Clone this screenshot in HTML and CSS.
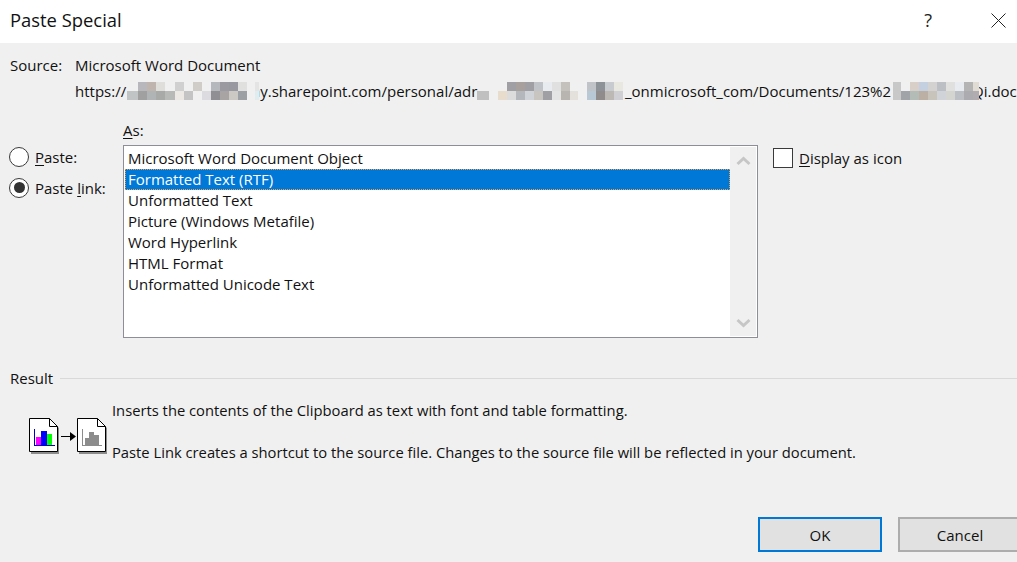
FILE: index.html
```html
<!DOCTYPE html>
<html lang="en">
<head>
<meta charset="utf-8">
<title>Paste Special</title>
<link rel="stylesheet" href="styles.css">
</head>
<body>
<div class="dialog">
  <header class="titlebar">
    <h1 class="title">Paste Special</h1>
    <span class="help">?</span>
    <svg class="close" width="15" height="15" viewBox="0 0 15 15"><path d="M0.5 0.5L14.5 14.5M14.5 0.5L0.5 14.5" stroke="#222" stroke-width="1" fill="none"/></svg>
  </header>

  <section class="source">
    <div class="source-label">Source:</div>
    <div class="source-value">
      <div class="source-name">Microsoft Word Document</div>
      <div class="url">
        <span class="url-a">https://</span>
        <svg class="mosaic m1" width="132" height="18" viewBox="127 82 132 18" shape-rendering="crispEdges">
          <rect x="247" y="82" width="8" height="18" fill="#f0f0f0"/>
          <rect x="138" y="82" width="9" height="9" fill="#b8b8bc"/><rect x="147" y="82" width="9" height="9" fill="#bfb5ae"/><rect x="156" y="82" width="9" height="9" fill="#e0dedb"/><rect x="175" y="82" width="9" height="9" fill="#d0d0d0"/><rect x="193" y="82" width="9" height="9" fill="#d0cdc8"/><rect x="211" y="82" width="9" height="9" fill="#b5b8bc"/><rect x="220" y="82" width="9" height="9" fill="#9a9aa0"/><rect x="229" y="82" width="9" height="9" fill="#9898a0"/><rect x="238" y="82" width="9" height="9" fill="#e0e0de"/><rect x="255" y="82" width="4" height="9" fill="#e4e4e4"/>
          <rect x="127" y="91" width="11" height="9" fill="#c0c4c4"/><rect x="138" y="91" width="9" height="9" fill="#a0a0a0"/><rect x="147" y="91" width="9" height="9" fill="#b0b4b4"/><rect x="156" y="91" width="9" height="9" fill="#a8aaa8"/><rect x="165" y="91" width="10" height="9" fill="#b8bab8"/><rect x="175" y="91" width="9" height="9" fill="#ece8e4"/><rect x="184" y="91" width="9" height="9" fill="#c4c4c4"/><rect x="202" y="91" width="9" height="9" fill="#dcdce0"/><rect x="211" y="91" width="9" height="9" fill="#909094"/><rect x="220" y="91" width="9" height="9" fill="#a8a4a4"/><rect x="229" y="91" width="9" height="9" fill="#ccc8c4"/><rect x="238" y="91" width="9" height="9" fill="#9ca0a4"/><rect x="255" y="91" width="4" height="9" fill="#e0ecee"/>
        </svg>
        <span class="url-b">hy.sharepoint.com/personal/adr</span>
        <svg class="mosaic m2" width="148" height="18" viewBox="477 82 148 18" shape-rendering="crispEdges">
          <rect x="507" y="82" width="9" height="9" fill="#a0a0a4"/><rect x="516" y="82" width="9" height="9" fill="#a8a09c"/><rect x="525" y="82" width="9" height="9" fill="#a0a0a4"/><rect x="534" y="82" width="9" height="9" fill="#c0c4c8"/><rect x="543" y="82" width="9" height="9" fill="#e8ecf0"/><rect x="552" y="82" width="9" height="9" fill="#e0e0e0"/><rect x="561" y="82" width="9" height="9" fill="#c4c0bc"/><rect x="587" y="82" width="9" height="9" fill="#c0c4c8"/><rect x="596" y="82" width="9" height="9" fill="#8c9298"/><rect x="605" y="82" width="9" height="9" fill="#c8ccd0"/><rect x="614" y="82" width="9" height="9" fill="#e8e8e0"/>
          <rect x="477" y="91" width="12" height="9" fill="#c0c0c0"/><rect x="498" y="91" width="9" height="9" fill="#e8dccc"/><rect x="507" y="91" width="9" height="9" fill="#dcdcdc"/><rect x="516" y="91" width="9" height="9" fill="#b4b8bc"/><rect x="525" y="91" width="9" height="9" fill="#d0d4d8"/><rect x="534" y="91" width="9" height="9" fill="#c8c4c0"/><rect x="543" y="91" width="9" height="9" fill="#a0a0a4"/><rect x="552" y="91" width="9" height="9" fill="#e4e4e4"/><rect x="561" y="91" width="9" height="9" fill="#b8b4b0"/><rect x="570" y="91" width="8" height="9" fill="#e4e0dc"/><rect x="587" y="91" width="9" height="9" fill="#b8c8d4"/><rect x="596" y="91" width="9" height="9" fill="#908c8c"/><rect x="605" y="91" width="9" height="9" fill="#bcb8b4"/><rect x="614" y="91" width="9" height="9" fill="#d0d0d4"/>
        </svg>
        <span class="url-c">_onmicrosoft_com/Documents/123%2</span>
        <svg class="mosaic m3" width="86" height="18" viewBox="893 82 86 18" shape-rendering="crispEdges">
          <rect x="893" y="82" width="8" height="9" fill="#c8c8c8"/><rect x="910" y="82" width="9" height="9" fill="#d8d0c8"/><rect x="919" y="82" width="9" height="9" fill="#c4d0e0"/><rect x="928" y="82" width="9" height="9" fill="#d4d2d0"/><rect x="937" y="82" width="9" height="9" fill="#bcc0c4"/><rect x="946" y="82" width="9" height="9" fill="#e0e0de"/><rect x="955" y="82" width="9" height="9" fill="#e8ecf0"/><rect x="964" y="82" width="9" height="9" fill="#b4b4b4"/><rect x="973" y="82" width="6" height="9" fill="#e0dcd4"/>
          <rect x="893" y="91" width="8" height="9" fill="#c8c8c8"/><rect x="901" y="91" width="9" height="9" fill="#a0a4a8"/><rect x="910" y="91" width="9" height="9" fill="#b4bcb8"/><rect x="919" y="91" width="9" height="9" fill="#bcb0a4"/><rect x="928" y="91" width="9" height="9" fill="#c8c4bc"/><rect x="937" y="91" width="9" height="9" fill="#d0d4d8"/><rect x="946" y="91" width="9" height="9" fill="#d4d4d0"/><rect x="955" y="91" width="9" height="9" fill="#bcc0c4"/><rect x="964" y="91" width="9" height="9" fill="#acacb0"/><rect x="973" y="91" width="6" height="9" fill="#b0acb0"/>
        </svg>
        <span class="url-d">Qi.doc</span>
      </div>
    </div>
  </section>

  <section class="paste">
    <div class="options">
      <label class="radio-row"><span class="radio"></span><span><u>P</u>aste:</span></label>
      <label class="radio-row"><span class="radio is-on"></span><span>Paste <u>l</u>ink:</span></label>
    </div>
    <div class="as">
      <div class="as-label"><u>A</u>s:</div>
      <div class="listbox">
        <ul class="items">
          <li>Microsoft Word Document Object</li>
          <li class="selected">Formatted Text (RTF)</li>
          <li>Unformatted Text</li>
          <li>Picture (Windows Metafile)</li>
          <li>Word Hyperlink</li>
          <li>HTML Format</li>
          <li>Unformatted Unicode Text</li>
        </ul>
        <div class="scrollbar">
          <svg width="17" height="10" viewBox="0 0 17 10"><path d="M2.500 8L8.500 2.500L14.500 8" stroke="#c6c6c6" stroke-width="3" fill="none"/></svg>
          <svg width="17" height="10" viewBox="0 0 17 10"><path d="M2.500 2L8.500 7.500L14.500 2" stroke="#c6c6c6" stroke-width="3" fill="none"/></svg>
        </div>
      </div>
    </div>
    <label class="check-row"><span class="checkbox"></span><span><u>D</u>isplay as icon</span></label>
  </section>

  <section class="result">
    <div class="result-head"><span>Result</span><span class="rule"></span></div>
    <div class="result-body">
      <svg class="result-icon" width="79" height="36" viewBox="0 0 79 36">
        <path d="M22 2L30 10V36H2V34H28V10Z" fill="#8c8c8c"/>
        <path d="M0.500 0.500H20.500L28.500 8.500V33.500H0.500Z" fill="#fff" stroke="#000"/>
        <path d="M20.500 0.500V8.500H28.500" fill="none" stroke="#000"/>
        <g shape-rendering="crispEdges">
          <rect x="5" y="11" width="1" height="17" fill="#0000c8"/>
          <rect x="5" y="27" width="21" height="1" fill="#0000c8"/>
          <rect x="7" y="19" width="5" height="8" fill="#ff00ff"/>
          <rect x="12" y="13" width="6" height="14" fill="#0000ff"/>
          <rect x="18" y="16" width="5" height="11" fill="#00ff00"/>
          <rect x="32" y="18" width="10" height="1" fill="#000"/>
        </g>
        <path d="M41 14V23L47 18.500Z" fill="#000"/>
        <path d="M70 2L78 10V36H50V34H76V10Z" fill="#8c8c8c"/>
        <path d="M48.500 0.500H68.500L76.500 8.500V33.500H48.500Z" fill="#fff" stroke="#000"/>
        <path d="M68.500 0.500V8.500H76.500" fill="none" stroke="#000"/>
        <g shape-rendering="crispEdges" fill="#8c8c8c">
          <rect x="53" y="11" width="1" height="17"/>
          <rect x="53" y="27" width="20" height="1"/>
          <rect x="56" y="20" width="4" height="7"/>
          <rect x="60" y="14" width="5" height="13"/>
          <rect x="65" y="17" width="5" height="10"/>
        </g>
      </svg>
      <div class="result-text">
        <p>Inserts the contents of the Clipboard as text with font and table formatting.</p>
        <p>Paste Link creates a shortcut to the source file. Changes to the source file will be reflected in your document.</p>
      </div>
    </div>
  </section>

  <footer class="buttons">
    <button class="btn btn-default">OK</button>
    <button class="btn">Cancel</button>
  </footer>
</div>
</body>
</html>
```

FILE: styles.css
```css
* { box-sizing: border-box; }
html, body { margin: 0; padding: 0; }
body {
  width: 1017px;
  height: 562px;
  overflow: hidden;
  background: #f0f0f0;
  color: #111;
  font-family: "Open Sans", "Noto Sans", "Liberation Sans", sans-serif;
  font-size: 15px;
  line-height: 20px;
}
u { text-underline-offset: 2px; }
.dialog { display: flex; flex-direction: column; width: 1017px; height: 562px; }

.titlebar { display: flex; align-items: center; height: 43px; flex: none; background: #fff; padding: 0 11px 3px 10px; }
.title { margin: 0; font-size: 18.400px; font-weight: 400; flex: 1; }
.help { font-size: 18px; margin-right: 59px; color: #222; }
.close { flex: none; }

.source { display: flex; padding: 12px 0 0 10px; height: 77px; flex: none; }
.source-label { width: 65px; flex: none; }
.source-value { flex: 1; min-width: 0; }
.source-name { height: 26px; }
.url { display: flex; height: 20px; white-space: nowrap; overflow: hidden; }
.url span { flex: none; }
.url-a { width: 52px; }
.url-b { width: 226px; margin-left: -8px; }
.url-c { width: 268px; }
.url-d { margin-left: -7px; }
.mosaic { flex: none; margin-top: 1px; position: relative; z-index: 1; }

.paste { display: flex; flex: none; height: 248px; padding-left: 9px; }
.options { width: 114px; flex: none; padding-top: 26px; display: flex; flex-direction: column; gap: 10px; }
.radio-row { display: flex; align-items: center; height: 21px; gap: 6px; }
.radio { width: 20px; height: 20px; flex: none; border: 1.500px solid #3a3a3a; border-radius: 50%; background: #fff; display: flex; align-items: center; justify-content: center; }
.is-on::after { content: ""; width: 11px; height: 11px; border-radius: 50%; background: #333; }

.as { width: 635px; flex: none; }
.as-label { height: 25px; }
.listbox { display: flex; height: 193px; border: 1px solid #8e8e96; background: #fff; padding: 1px; }
.items { list-style: none; margin: 0; padding: 1px 0 0 0; flex: 1; }
.items li { height: 21px; padding: 0 4px 0 3px; line-height: 21px; }
.items .selected { background: #0078d7; color: #fff; outline: 1px dotted #e8a04c; outline-offset: -1px; }
.scrollbar { width: 26px; flex: none; background: #f0f0f0; display: flex; flex-direction: column; justify-content: space-between; align-items: center; padding: 9px 0 8px 0; }

.check-row { display: flex; align-items: flex-start; gap: 6px; padding: 28px 0 0 15px; height: 50px; }
.checkbox { width: 20px; height: 20px; flex: none; border: 1.500px solid #3a3a3a; background: #fff; }

.result { flex: none; }
.result-head { display: flex; align-items: center; gap: 7px; padding-left: 10px; height: 20px; }
.rule { flex: 1; height: 1px; background: #d9d9d9; }
.result-body { display: flex; padding: 12px 0 0 29px; }
.result-icon { flex: none; margin: 18px 4px 0 0; }
.result-text { font-size: 14.750px; }
.result-text p { margin: 0 0 22px 0; }

.buttons { display: flex; gap: 16px; padding-left: 758px; margin-top: 33px; }
.btn { width: 124px; height: 35px; flex: none; padding: 0; background: #e1e1e1; border: 2px solid #adadad; font: inherit; color: #111; }
.btn-default { border-color: #0078d7; }
```
